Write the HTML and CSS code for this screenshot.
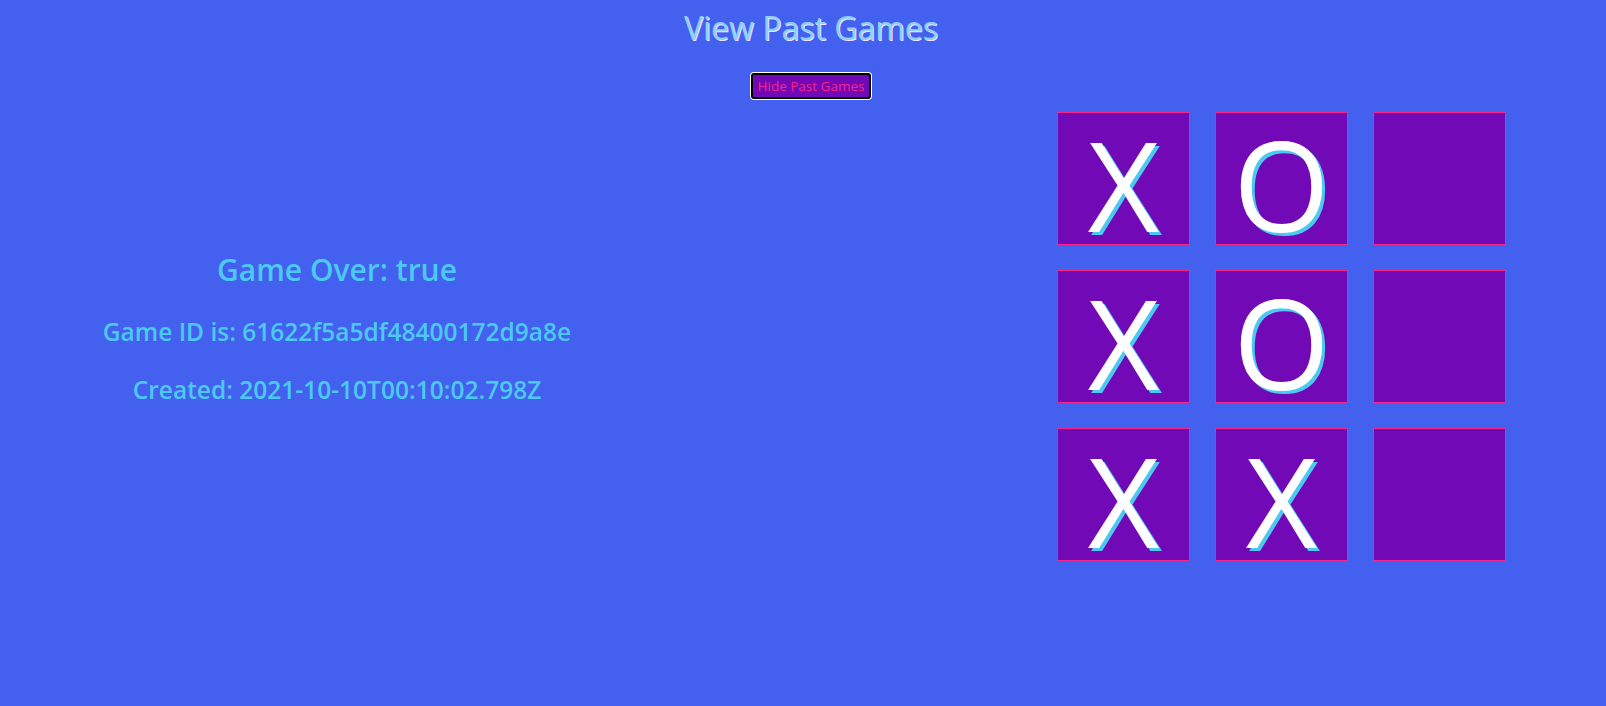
FILE: index.html
```html
<!DOCTYPE html>
<html lang="en">
<head>
<meta charset="utf-8">
<title>View Past Games</title>
<link rel="stylesheet" href="styles.css">
</head>
<body>
<div class="page">
  <header class="top">
    <h1 class="title">View Past Games</h1>
    <button class="toggle" type="button">Hide Past Games</button>
  </header>
  <main class="game">
    <section class="info">
      <h2 class="over">Game Over: true</h2>
      <h3 class="line">Game ID is: 61622f5a5df48400172d9a8e</h3>
      <h3 class="line">Created: 2021-10-10T00:10:02.798Z</h3>
    </section>
    <section class="board">
      <div class="cell">X</div>
      <div class="cell">O</div>
      <div class="cell"></div>
      <div class="cell">X</div>
      <div class="cell">O</div>
      <div class="cell"></div>
      <div class="cell">X</div>
      <div class="cell">X</div>
      <div class="cell"></div>
    </section>
  </main>
</div>
</body>
</html>
```
FILE: styles.css
```css
html, body {
  margin: 0;
  padding: 0;
}
body {
  background: #4361ee;
  font-family: "Open Sans", "Noto Sans", sans-serif;
  overflow: hidden;
}
.page {
  padding-left: 16px;
  width: 1590px;
  height: 706px;
}
.top {
  display: flex;
  flex-direction: column;
  align-items: center;
}
.title {
  margin: 6px 0 0;
  font-size: 32px;
  font-weight: 400;
  line-height: 44px;
  color: #8ecff9;
  text-shadow: 1px 1px 0 #f4e2ff;
}
.toggle {
  margin-top: 23px;
  padding: 1px 5px;
  background: #7209b7;
  color: #f72585;
  border: 2px solid #000;
  border-radius: 3px;
  box-shadow: 0 0 0 1px #fff;
  font-family: "Open Sans", "Noto Sans", sans-serif;
  font-size: 13.5px;
  line-height: 20px;
}
.game {
  display: flex;
  align-items: flex-start;
  margin-top: 13px;
}
.info {
  width: 642px;
  margin-top: 138px;
  text-align: center;
  color: #4cc9f0;
  display: flex;
  flex-direction: column;
  gap: 26px;
}
.over {
  margin: 0;
  font-size: 30px;
  font-weight: 600;
  line-height: 40px;
}
.line {
  margin: 0;
  font-size: 24.5px;
  font-weight: 600;
  line-height: 32px;
}
.board {
  margin-left: 399px;
  display: grid;
  grid-template-columns: repeat(3, 133px);
  grid-auto-rows: 133px;
  gap: 25px;
}
.cell {
  box-sizing: border-box;
  background: #7209b7;
  border: 1px solid #f72585;
  color: #fff;
  font-size: 124px;
  font-weight: 500;
  line-height: 141px;
  text-align: center;
  text-shadow: 3px 3px 0 #4cc9f0;
}
```
